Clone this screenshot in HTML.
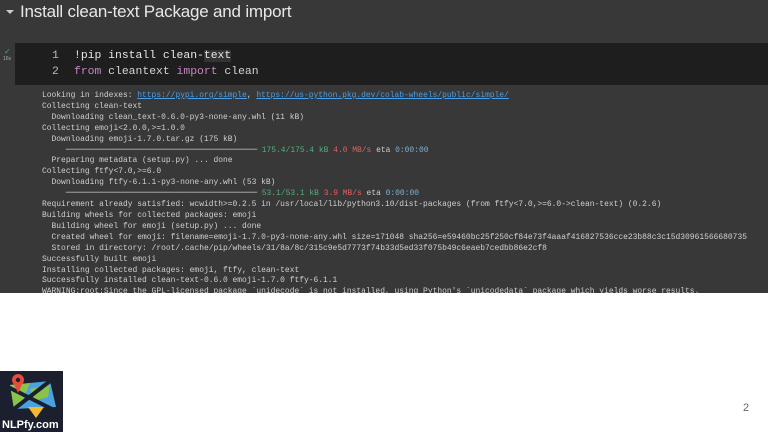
<!DOCTYPE html>
<html><head><style>
body{margin:0;width:768px;height:432px;background:#fff;position:relative;overflow:hidden;font-family:"Liberation Sans",sans-serif}
#dark{position:absolute;left:0;top:0;width:768px;height:293px;background:#383838;overflow:hidden}
.title{position:absolute;left:20px;top:2px;color:#e8e8e8;font-size:17px;letter-spacing:-0.2px}
.tri{position:absolute;left:6px;top:10px;width:0;height:0;border-left:4px solid transparent;border-right:4px solid transparent;border-top:4px solid #ccc}
#cell{position:absolute;left:15px;top:43px;width:753px;height:42px;background:#1e1e1e}
.code{position:absolute;font-family:"Liberation Mono",monospace;font-size:11.4px;color:#d4d4d4;line-height:16px}
.out{position:absolute;left:42px;top:91px;font-family:"Liberation Mono",monospace;font-size:7.95px;line-height:10.9px;color:#d0d0d0;white-space:pre}
a{color:#4a9fe8;text-decoration:underline}
.g{color:#4fb07a}.r{color:#e06060}.b{color:#7ab3d8}.bar{color:#888}
</style></head><body>
<div id="dark">
<div class="tri"></div>
<div class="title">Install clean-text Package and import</div>
<div style="position:absolute;left:4px;top:47px;color:#4caf50;font-size:8px">✓</div>
<div style="position:absolute;left:3px;top:56px;color:#aaa;font-size:5px">16s</div>
<div style="position:absolute;left:20px;top:49px;color:#bbb;font-family:'Liberation Mono',monospace;font-size:8px">[1]</div>
<div id="cell"></div>
<div class="code" style="left:52px;top:48px;color:#bbb">1<br>2</div>
<div class="code" style="left:74px;top:48px"><span style="color:#e8e8e8">!pip install clean-</span><span style="background:#333;color:#e8e8e8">text</span><br><span style="color:#c586c0">from</span> cleantext <span style="color:#c586c0">import</span> clean</div>
<div class="out">Looking in indexes: <a>https://pypi.org/simple</a>, <a>https://us-python.pkg.dev/colab-wheels/public/simple/</a>
Collecting clean-text
  Downloading clean_text-0.6.0-py3-none-any.whl (11 kB)
Collecting emoji&lt;2.0.0,&gt;=1.0.0
  Downloading emoji-1.7.0.tar.gz (175 kB)
     <span class="bar">━━━━━━━━━━━━━━━━━━━━━━━━━━━━━━━━━━━━━━━━</span> <span class="g">175.4/175.4 kB</span> <span class="r">4.0 MB/s</span> eta <span class="b">0:00:00</span>
  Preparing metadata (setup.py) ... done
Collecting ftfy&lt;7.0,&gt;=6.0
  Downloading ftfy-6.1.1-py3-none-any.whl (53 kB)
     <span class="bar">━━━━━━━━━━━━━━━━━━━━━━━━━━━━━━━━━━━━━━━━</span> <span class="g">53.1/53.1 kB</span> <span class="r">3.9 MB/s</span> eta <span class="b">0:00:00</span>
Requirement already satisfied: wcwidth&gt;=0.2.5 in /usr/local/lib/python3.10/dist-packages (from ftfy&lt;7.0,&gt;=6.0-&gt;clean-text) (0.2.6)
Building wheels for collected packages: emoji
  Building wheel for emoji (setup.py) ... done
  Created wheel for emoji: filename=emoji-1.7.0-py3-none-any.whl size=171048 sha256=e59460bc25f250cf84e73f4aaaf416827536cce23b88c3c15d30961566680735
  Stored in directory: /root/.cache/pip/wheels/31/8a/8c/315c9e5d7773f74b33d5ed33f075b49c6eaeb7cedbb86e2cf8
Successfully built emoji
Installing collected packages: emoji, ftfy, clean-text
Successfully installed clean-text-0.6.0 emoji-1.7.0 ftfy-6.1.1
WARNING:root:Since the GPL-licensed package `unidecode` is not installed, using Python's `unicodedata` package which yields worse results.</div>
</div>
<div style="position:absolute;left:0;top:371px;width:63px;height:61px;background:#1c1f2e">
<svg width="63" height="50" viewBox="0 0 63 50">
<polygon points="10,14 50,10 56,36 14,38" fill="#4aa3e0"/>
<polygon points="10,14 30,12 20,36 14,38" fill="#8bc34a"/>
<path d="M30 18 L50 14 L48 26 L34 30 Z" fill="#8bc34a"/>
<path d="M8 16 L52 38 M50 10 L14 38" stroke="#1c1f2e" stroke-width="4"/>
<polygon points="28,36 44,36 36,47" fill="#f5b82e"/>
<circle cx="18" cy="9" r="6" fill="#e84a3c"/><polygon points="13,11 23,11 18,22" fill="#e84a3c"/>
<circle cx="18" cy="9" r="2.2" fill="#1c1f2e"/>
</svg>
<div style="position:absolute;left:2px;top:48px;color:#fff;font-weight:bold;font-size:11px">NLPfy.com</div>
</div>
<div style="position:absolute;left:743px;top:402px;color:#666;font-size:11px">2</div>
</body></html>
